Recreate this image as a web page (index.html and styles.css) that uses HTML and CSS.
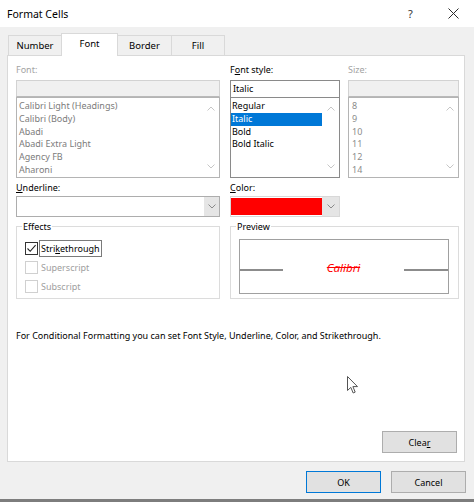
FILE: index.html
```html
<!DOCTYPE html>
<html lang="en">
<head>
<meta charset="utf-8">
<title>Format Cells</title>
<link rel="stylesheet" href="styles.css">
</head>
<body>
<div class="window">
  <div class="titlebar">
    <span class="title">Format Cells</span>
    <span class="help">?</span>
    <span class="close"><svg width="11" height="11" viewBox="0 0 11 11"><path d="M0.5 0.5 L10.5 10.5 M10.5 0.5 L0.5 10.5" stroke="#2b2b2b" stroke-width="1" fill="none"/></svg></span>
  </div>
  <div class="body">
    <div class="tabs">
      <div class="tab t-number">Number</div>
      <div class="tab t-font active">Font</div>
      <div class="tab t-border">Border</div>
      <div class="tab t-fill">Fill</div>
    </div>
    <div class="panel">
      <div class="cols">
        <div class="col col1">
          <div class="label disabled">Font:</div>
          <div class="field field-disabled"></div>
          <div class="list">
            <div class="items items-font">
              <div class="item">Calibri Light (Headings)</div>
              <div class="item">Calibri (Body)</div>
              <div class="item">Abadi</div>
              <div class="item">Abadi Extra Light</div>
              <div class="item">Agency FB</div>
              <div class="item">Aharoni</div>
            </div>
            <div class="scroll">
              <svg width="8" height="5" viewBox="0 0 8 5"><path d="M0.5 4.5 L4 1 L7.5 4.5" stroke="#c6c6c6" fill="none"/></svg>
              <svg width="8" height="5" viewBox="0 0 8 5"><path d="M0.5 0.5 L4 4 L7.5 0.5" stroke="#c6c6c6" fill="none"/></svg>
            </div>
          </div>
          <div class="label label-gap"><u>U</u>nderline:</div>
          <div class="combo">
            <span class="combo-val"></span>
            <span class="dd"><svg width="8" height="5" viewBox="0 0 8 5"><path d="M0.5 0.5 L4 4 L7.5 0.5" stroke="#8a8a8a" fill="none"/></svg></span>
          </div>
        </div>
        <div class="col col2">
          <div class="label">F<u>o</u>nt style:</div>
          <div class="field field-active">Italic</div>
          <div class="list list-dark">
            <div class="items items-style">
              <div class="item">Regular</div>
              <div class="item selected">Italic</div>
              <div class="item">Bold</div>
              <div class="item">Bold Italic</div>
            </div>
            <div class="scroll scroll-style">
              <svg width="8" height="5" viewBox="0 0 8 5"><path d="M0.5 4.5 L4 1 L7.5 4.5" stroke="#c6c6c6" fill="none"/></svg>
              <svg width="8" height="5" viewBox="0 0 8 5"><path d="M0.5 0.5 L4 4 L7.5 0.5" stroke="#c6c6c6" fill="none"/></svg>
            </div>
          </div>
          <div class="label label-gap"><u>C</u>olor:</div>
          <div class="combo combo-color">
            <span class="swatch"></span>
            <span class="dd dd-color"><svg width="8" height="5" viewBox="0 0 8 5"><path d="M0.5 0.5 L4 4 L7.5 0.5" stroke="#8a8a8a" fill="none"/></svg></span>
          </div>
        </div>
        <div class="col col3">
          <div class="label disabled">Size:</div>
          <div class="field field-disabled"></div>
          <div class="list">
            <div class="items items-size">
              <div class="item">8</div>
              <div class="item">9</div>
              <div class="item">10</div>
              <div class="item">11</div>
              <div class="item">12</div>
              <div class="item">14</div>
            </div>
            <div class="scroll">
              <svg width="8" height="5" viewBox="0 0 8 5"><path d="M0.5 4.5 L4 1 L7.5 4.5" stroke="#c6c6c6" fill="none"/></svg>
              <svg width="8" height="5" viewBox="0 0 8 5"><path d="M0.5 0.5 L4 4 L7.5 0.5" stroke="#c6c6c6" fill="none"/></svg>
            </div>
          </div>
        </div>
      </div>
      <div class="groups">
        <fieldset class="group group-effects">
          <legend>Effects</legend>
          <div class="check-row">
            <span class="checkbox checked"><svg width="11" height="11" viewBox="0 0 11 11"><path d="M1.5 5.5 L4.2 8.3 L9.6 2.2" stroke="#222" stroke-width="1.1" fill="none"/></svg></span>
            <span class="check-label focused">Stri<u>k</u>ethrough</span>
          </div>
          <div class="check-row">
            <span class="checkbox off"></span>
            <span class="check-label muted">Superscript</span>
          </div>
          <div class="check-row">
            <span class="checkbox off"></span>
            <span class="check-label muted">Subscript</span>
          </div>
        </fieldset>
        <fieldset class="group group-preview">
          <legend>Preview</legend>
          <div class="preview-box">
            <span class="pline pline-left"></span>
            <span class="sample">Calibri</span>
            <span class="pline pline-right"></span>
          </div>
        </fieldset>
      </div>
      <p class="info">For Conditional Formatting you can set Font Style, Underline, Color, and Strikethrough.</p>
      <div class="clear-row">
        <button class="btn">Clea<u>r</u></button>
      </div>
    </div>
    <div class="footer">
      <button class="btn btn-default">OK</button>
      <button class="btn">Cancel</button>
    </div>
  </div>
  <div class="bottom-bar"></div>
</div>
<svg class="cursor" width="12" height="18" viewBox="0 0 12 18"><path d="M0.5 0.5 L0.5 14.5 L3.8 11.4 L6.2 17 L8.2 16.1 L5.9 10.6 L10.5 10.6 Z" fill="#fff" stroke="#555" stroke-width="1" stroke-linejoin="miter"/></svg>
</body>
</html>
```
FILE: styles.css
```css
* { box-sizing: border-box; }
html, body { margin: 0; padding: 0; }
body {
  width: 474px;
  height: 502px;
  overflow: hidden;
  background: #ffffff;
  font-family: "Noto Sans", "Open Sans", sans-serif;
  font-size: 9px;
  color: #000;
}
u { text-decoration-thickness: 1px; text-underline-offset: 1px; }

.window { display: flex; flex-direction: column; height: 502px; }

.titlebar {
  height: 27px;
  flex: 0 0 27px;
  display: flex;
  align-items: center;
  background: #fff;
  padding-left: 7px;
}
.title { flex: 1; font-size: 10.5px; color: #000; }
.help { font-size: 11px; color: #333; width: 8px; margin-right: 32px; }
.close { width: 11px; height: 11px; margin-right: 15px; display: flex; }

.body {
  flex: 1;
  display: flex;
  flex-direction: column;
  background: #f0f0f0;
  padding: 6px 9px 0 7px;
}

.tabs { display: flex; align-items: flex-end; height: 22px; padding-left: 1px; }
.tab {
  height: 20px;
  border: 1px solid #d9d9d9;
  border-bottom: none;
  margin-right: -1px;
  display: flex;
  align-items: center;
  justify-content: center;
  background: #f0f0f0;
  color: #000;
  font-size: 9.5px;
}
.t-number { width: 54px; }
.t-font { width: 57px; }
.t-border { width: 55px; }
.t-fill { width: 54px; }
.tab.active {
  height: 23px;
  margin-bottom: -1px;
  background: #fff;
  position: relative;
  z-index: 1;
  padding-bottom: 3px;
}

.panel {
  height: 407px;
  flex: 0 0 407px;
  background: #fff;
  border: 1px solid #d9d9d9;
  padding: 7px 5px 8px 8px;
  display: flex;
  flex-direction: column;
}

.cols { display: flex; }
.col { display: flex; flex-direction: column; }
.col1 { width: 204px; margin-right: 10px; }
.col2 { width: 110px; margin-right: 8px; }
.col3 { width: 111px; }

.label { height: 14px; line-height: 14px; margin-bottom: 3px; white-space: nowrap; }
.label.disabled { color: #a3a3a3; }
.label-gap { margin-top: 3px; margin-bottom: 1px; }

.field { height: 17px; line-height: 15px; padding-left: 2px; }
.field-disabled { background: #f0f0f0; border: 1px solid #d2d2d2; border-bottom-color: #b9b9b9; }
.field-active { background: #fff; border: 1px solid #8a8a8a; border-bottom: none; }

.list {
  height: 81px;
  border: 1px solid #b4b4b4;
  background: #fff;
  display: flex;
}
.list-dark { border-color: #8a8a8a; }
.items { flex: 1; padding-top: 2px; }
.item { height: 12.75px; line-height: 12.75px; white-space: nowrap; }
.items-font { padding-left: 2px; color: #7c7c7c; }
.items-size { padding-left: 3px; color: #8c8c8c; }
.items-style .item { padding-left: 1px; }
.item.selected { background: #0078d7; color: #fff; }
.scroll {
  width: 16px;
  display: flex;
  flex-direction: column;
  align-items: center;
  justify-content: space-between;
  padding: 8px 0 8px;
}
.scroll-style { width: 17px; }

.combo {
  height: 21px;
  border: 1px solid #adadad;
  background: #fff;
  display: flex;
}
.combo-val { flex: 1; }
.dd {
  width: 15px;
  background: #e5e5e5;
  display: flex;
  align-items: center;
  justify-content: center;
}
.combo-color { border-color: #d8d8d8; }
.swatch { width: 91px; height: 17px; margin-top: 1px; background: #ff0000; }
.dd-color { width: 17px; }

.groups { display: flex; margin-top: 3px; }
.group {
  margin: 0;
  padding: 0;
  min-width: 0;
  height: 79px;
  border: 1px solid #dcdcdc;
}
.group legend {
  padding: 0 1px;
  margin-left: 5px;
  line-height: 13px;
  height: 13px;
  font-size: 9px;
}
.group-effects { width: 204px; margin-right: 10px; padding-top: 6px; }
.group-preview { width: 229px; padding-top: 6px; }

.check-row { height: 19px; display: flex; align-items: center; padding-left: 8px; }
.checkbox {
  width: 13px;
  height: 13px;
  border: 1px solid #333;
  background: #fff;
  display: flex;
  align-items: center;
  justify-content: center;
}
.checkbox.off { border-color: #d0d0d0; }
.check-label { margin-left: 1px; padding: 0 1px; height: 17px; line-height: 15px; border: 1px solid transparent; }
.check-label.focused { border-color: #7a7a7a; }
.check-label.muted { color: #a0a0a0; }

.preview-box {
  margin: 0 9px 0 8px;
  height: 55px;
  border: 1px solid #a0a0a0;
  display: flex;
  align-items: center;
  padding-top: 7px;
}
.pline { height: 2px; background: #8c8c8c; }
.pline-left { width: 43px; }
.pline-right { width: 44px; }
.sample {
  flex: 1;
  text-align: center;
  color: #ff0000;
  font-style: italic;
  font-size: 11.5px;
  text-decoration: line-through;
  margin-top: -5px;
}

.info { margin: 30px 0 0; line-height: 14px; height: 14px; white-space: nowrap; }

.clear-row { margin-top: auto; display: flex; justify-content: flex-end; padding-right: 2px; }

.btn {
  width: 75px;
  height: 22px;
  border: 1px solid #adadad;
  background: #e1e1e1;
  font-family: "Noto Sans", "Open Sans", sans-serif;
  font-size: 9px;
  color: #000;
  padding: 0;
  margin: 0;
}
.btn-default { border-color: #0078d7; }

.footer {
  height: 37px;
  flex: 0 0 37px;
  display: flex;
  justify-content: flex-end;
  align-items: flex-start;
  padding-top: 9px;
  gap: 10px;
  margin-right: -1px;
}

.bottom-bar { height: 3px; flex: 0 0 3px; background: #7d7d7d; }

.cursor { position: absolute; left: 347px; top: 376px; }
```
